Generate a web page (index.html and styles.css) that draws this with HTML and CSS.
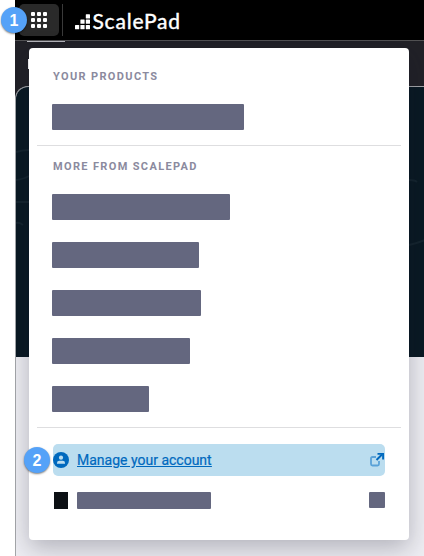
FILE: index.html
```html
<!DOCTYPE html>
<html lang="en">

<head>
  <meta charset="UTF-8">
  <meta name="viewport" content="width=device-width, initial-scale=1.0">
  <title>ScalePad</title>

  <link rel="stylesheet" href="styles.css">
</head>

<body>
  <div class="app">
    <header class="topbar">
      <button class="switcher" aria-label="Products">
        <svg width="18" height="18" viewBox="0 0 18 18" fill="#fff">
          <rect x="1" y="1" width="4" height="4" rx="1" />
          <rect x="7" y="1" width="4" height="4" rx="1" />
          <rect x="13" y="1" width="4" height="4" rx="1" />
          <rect x="1" y="7" width="4" height="4" rx="1" />
          <rect x="7" y="7" width="4" height="4" rx="1" />
          <rect x="13" y="7" width="4" height="4" rx="1" />
          <rect x="1" y="13" width="4" height="4" rx="1" />
          <rect x="7" y="13" width="4" height="4" rx="1" />
          <rect x="13" y="13" width="4" height="4" rx="1" />
        </svg>
      </button>
      <svg class="logo" width="110" height="30" viewBox="0 0 110 30" fill="#fff">
        <rect x="0" y="20" width="4.2" height="4.2" rx=".5" />
        <rect x="5.4" y="20" width="4.2" height="4.2" rx=".5" />
        <rect x="10.8" y="20" width="4.2" height="4.2" rx=".5" />
        <rect x="5.4" y="14.6" width="4.2" height="4.2" rx=".5" />
        <rect x="10.8" y="14.6" width="4.2" height="4.2" rx=".5" />
        <rect x="10.8" y="9.2" width="4.2" height="4.2" rx=".5" />
        <text x="17.5" y="23.5" textLength="87.5">ScalePad</text>
      </svg>
    </header>
    <nav class="subnav"></nav>
    <main class="content">
      <section class="hero">
        <svg width="408" height="270" viewBox="0 0 408 270" fill="none" stroke="#14242e" stroke-width="2">
          <path d="M0 65q7-2 13-2M0 93q8-1 13-4M0 115h13M0 136q4-1 7 2M393 93q6 0 8 2M393 158q9-2 16-5" />
        </svg>
      </section>
    </main>

    <div class="menu">
      <section class="group">
        <h2>Your products</h2>
        <div class="bar w-192"></div>
      </section>
      <section class="group more">
        <h2>More from ScalePad</h2>
        <div class="bar w-178"></div>
        <div class="bar w-147"></div>
        <div class="bar w-149"></div>
        <div class="bar w-138"></div>
        <div class="bar w-97"></div>
      </section>
      <section class="account">
        <a class="row active" href="#">
          <svg width="16" height="16" viewBox="0 0 16 16">
            <circle cx="8" cy="8" r="8" fill="#0069be" />
            <circle cx="8" cy="5.7" r="2.1" fill="#bbddef" />
            <path d="M4 11.8V11q0-2.2 2.2-2.2h3.6q2.200 0 2.200 2.200v.8z" fill="#bbddef" />
          </svg>
          <span class="label">Manage your account</span>
          <svg width="16" height="16" viewBox="0 0 16 16" fill="none">
            <path d="M7 5H3.500Q2 5 2 6.500V12Q2 13.500 3.500 13.500H8.500Q10 13.500 10 12V9" stroke="#5aa2d8" stroke-width="1.800" />
            <path d="M7.500 8L13 2.500" stroke="#0069be" stroke-width="1.900" />
            <path d="M8.500 1.900H14.100V7.500" stroke="#0069be" stroke-width="1.900" />
          </svg>
        </a>
        <div class="row">
          <span class="block-icon"></span>
          <span class="block-text"></span>
          <span class="block-end"></span>
        </div>
      </section>
    </div>
  </div>

  <span class="step step-1">1</span>
  <span class="step step-2">2</span>
</body>

</html>
```

FILE: styles.css
```css
* {
  box-sizing: border-box;
}

body {
  background: #fff;
  font-family: Roboto, sans-serif;
  height: 556px;
  margin: 0;
  overflow: hidden;
  position: relative;
}

.app {
  background: #212127;
  display: flex;
  flex-direction: column;
  height: 556px;
  margin-left: 15px;
  overflow: hidden;
  position: relative;
}

.topbar {
  align-items: flex-start;
  background: #000;
  border-bottom: 1px solid #515153;
  display: flex;
  height: 41px;
}

.switcher {
  align-items: flex-start;
  background: #2a2a2a;
  border: 0;
  border-radius: 5px;
  display: flex;
  height: 32px;
  margin: 4px 3px 0 4px;
  padding: 7px 0 0 11px;
  width: 40px;
}

.logo {
  border-left: 1px solid #3a3a3a;
  box-sizing: content-box;
  height: 32px;
  margin-top: 4px;
  padding-left: 12px;
}

.logo text {
  font-family: Lato, sans-serif;
  font-size: 21px;
  stroke: #fff;
  stroke-width: .4px;
}

.subnav {
  height: 45px;
}

.subnav::before {
  background: #b4b4ba;
  content: "";
  display: block;
  height: 1px;
  margin-left: 12px;
  width: 38px;
}

.subnav::after {
  background: #fff;
  content: "";
  display: block;
  height: 10px;
  margin: 17px 0 0 13px;
  width: 1px;
}

.content {
  background: #eeeef3;
  border-left: 1px solid #a5a7aa;
  border-top: 1px solid #a5a7aa;
  border-radius: 13px 0 0;
  flex: 1;
  overflow: hidden;
}

.hero {
  background: #091923;
  height: 270px;
}

.menu {
  background: #fff;
  border-radius: 4px;
  box-shadow: 0 8px 24px rgba(20, 20, 40, .28);
  height: 492px;
  left: 14px;
  padding: 0 8px;
  position: absolute;
  top: 48px;
  width: 380px;
}

.group {
  border-bottom: 1px solid #dedee0;
  display: flex;
  flex-direction: column;
  gap: 22px;
  padding: 21px 15px 15px;
}

.more {
  padding-top: 13px;
}

.group h2 {
  color: #8b8a9e;
  font-size: 11px;
  font-weight: 700;
  letter-spacing: 1.35px;
  line-height: 16px;
  margin: 0 0 -3px 1px;
  text-transform: uppercase;
}

.bar {
  background: #64677f;
  border-radius: 1px;
  height: 26px;
}

.w-192 { width: 192px; }
.w-178 { width: 178px; }
.w-147 { width: 147px; }
.w-149 { width: 149px; }
.w-138 { width: 138px; }
.w-97 { width: 97px; }

.account {
  display: flex;
  flex-direction: column;
  gap: 8px;
  padding: 16px 16px 0;
}

.row {
  align-items: center;
  border-radius: 5px;
  display: flex;
  height: 32px;
}

.active {
  background: #bbddef;
  color: #0069be;
}

.label {
  flex: 1;
  font-size: 14px;
  margin-left: 8px;
  text-decoration: underline;
  -webkit-text-stroke: .2px #0069be;
}

.block-icon {
  background: #0c1014;
  height: 17px;
  margin: 0 9px 0 1px;
  width: 14px;
}

.block-text {
  background: #64677f;
  border-radius: 1px;
  height: 17px;
  width: 134px;
}

.block-end {
  background: #64677f;
  border-radius: 1px;
  height: 16px;
  margin-left: auto;
  width: 16px;
}

.step {
  background: #55a2f8;
  border-radius: 50%;
  box-shadow: 0 1px 2px rgba(0, 0, 0, .5);
  color: #fff;
  font: bold 16px/27px "Liberation Sans", sans-serif;
  height: 26px;
  position: absolute;
  text-align: center;
  width: 26px;
}

.step-1 {
  left: 1px;
  top: 7px;
}

.step-2 {
  left: 24px;
  top: 447px;
}
```
